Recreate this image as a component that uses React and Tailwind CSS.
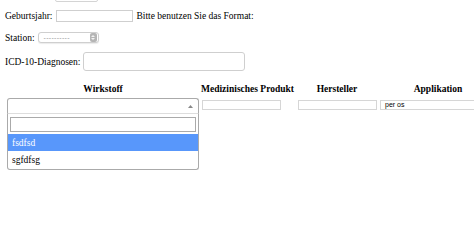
import React from "react";

export default function App() {
  return (
    <div className="w-[474px] h-[244px] overflow-hidden bg-white text-black text-[9.5px] leading-[12px] [font-family:'Liberation_Serif',serif]">
      <div className="ml-[55px] mt-[-10px] w-[43px] h-[12px] border border-[#d4d4d4] rounded-[2px]" />
      <div className="flex items-center pl-[5px] mt-[8px] h-[12px]">
        <span>Geburtsjahr:</span>
        <div className="ml-[3px] w-[77px] h-[12px] border border-[#cfcfcf] bg-white" />
        <span className="ml-[4px]">Bitte benutzen Sie das Format:</span>
      </div>
      <div className="flex items-center pl-[5px] mt-[10px] h-[11px]">
        <span>Station:</span>
        <div className="ml-[3px] w-[61px] h-[11px] border border-[#cfcfcf] rounded-[3px] bg-white flex items-center pl-[5px] pr-[1px] shadow-[0_1px_1px_rgba(0,0,0,0.08)]">
          <span className="text-[7px] leading-[7px] tracking-[0.3px] text-[#999] [font-family:'Liberation_Sans',sans-serif]">----------</span>
          <div className="ml-auto w-[7px] h-[9px] rounded-[2px] bg-[#b5b5b5] flex flex-col items-center justify-center gap-[1px]">
            <svg width="4" height="2" viewBox="0 0 4 2"><path d="M0 2L2 0L4 2Z" fill="#f2f2f2" /></svg>
            <svg width="4" height="2" viewBox="0 0 4 2"><path d="M0 0L2 2L4 0Z" fill="#f2f2f2" /></svg>
          </div>
        </div>
      </div>
      <div className="flex items-center pl-[5px] mt-[9px] h-[19px]">
        <span>ICD-10-Diagnosen:</span>
        <div className="ml-[3px] w-[162px] h-[19px] border border-[#cfcfcf] rounded-[3px] bg-white" />
      </div>
      <div className="flex mt-[12px] font-bold h-[12px] items-center whitespace-nowrap">
        <div className="ml-[7px] w-[192px] shrink-0 text-center">Wirkstoff</div>
        <div className="w-[97px] shrink-0 text-center">Medizinisches Produkt</div>
        <div className="w-[82px] shrink-0 text-center">Hersteller</div>
        <div className="w-[120px] shrink-0 text-center">Applikation</div>
      </div>
      <div className="flex mt-[3px] items-start">
        <div className="ml-[7px] w-[192px] shrink-0">
          <div className="h-[16px] border border-[#aaa] border-b-[#ddd] rounded-t-[3px] bg-white flex items-center justify-end pr-[5px]">
            <svg width="5" height="3" viewBox="0 0 5 3"><path d="M0 3L2.5 0L5 3Z" fill="#888" /></svg>
          </div>
          <div className="border border-t-0 border-[#aaa] rounded-b-[3px] bg-white">
            <div className="px-[2px] pt-[3px] pb-[2px]">
              <div className="h-[15px] border border-[#aaa]" />
            </div>
            <div className="h-[17px] bg-[#5897fb] text-white pl-[4px] flex items-center">fsdfsd</div>
            <div className="h-[18px] pl-[4px] flex items-center">sgfdfsg</div>
          </div>
        </div>
        <div className="ml-[3px] mt-[2px] w-[79px] h-[10px] shrink-0 border border-[#d6d6d6] bg-white" />
        <div className="ml-[17px] mt-[2px] w-[79px] h-[10px] shrink-0 border border-[#d6d6d6] bg-white" />
        <div className="ml-[3px] mt-[2px] w-[110px] h-[10px] shrink-0 border border-[#d6d6d6] bg-white flex items-center pl-[4px] text-[7px] text-black [font-family:'Liberation_Sans',sans-serif]">per os</div>
      </div>
    </div>
  );
}
